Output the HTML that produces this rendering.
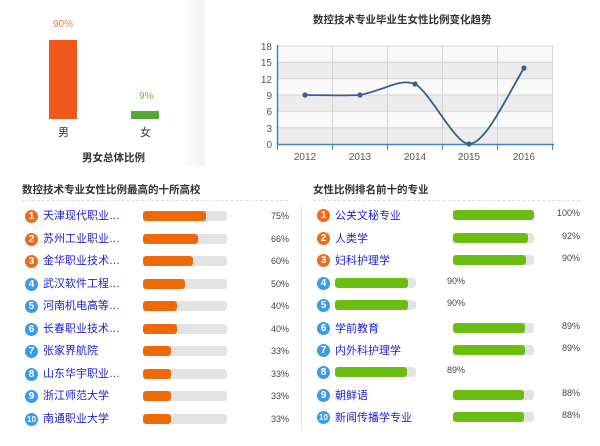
<!DOCTYPE html>
<html><head><meta charset="utf-8"><style>
*{margin:0;padding:0;box-sizing:border-box}
body{width:600px;height:446px;background:#fff;position:relative;overflow:hidden;font-family:"Liberation Sans","Noto Sans CJK SC",sans-serif}
.a{position:absolute;white-space:nowrap}
.lp{left:0;top:0;width:205px;height:166px;background:linear-gradient(to right,#fff 0,#fff 180px,#f3f3f3 205px)}
.ic{position:absolute;width:13px;height:13px;border-radius:50%;color:#fff;font-size:10px;font-weight:bold;text-align:center;line-height:13px}
.o{background:#f26b1d}.b{background:#3a9be8}
.nm{position:absolute;font-size:11px;color:#2020d0;line-height:14px}
.bg{position:absolute;height:10px;background:#e3e3e3;border-radius:3px}
.f{position:absolute;left:0;top:0;height:10px;border-radius:3px}
.pc{position:absolute;font-size:9px;color:#444}
.h{font-size:10.5px;font-weight:bold;color:#333}
</style></head><body>
<div class="a lp"></div>
<div class="a" style="left:53px;top:19px;font-size:10px;color:#f47a45">90%</div>
<div class="a" style="left:49px;top:40px;width:28px;height:79px;background:#ee5a1c"></div>
<div class="a" style="left:139px;top:91px;font-size:10px;color:#6bbb44">9%</div>
<div class="a" style="left:131px;top:111px;width:28px;height:8px;background:#55a836"></div>
<div class="a" style="left:58px;top:124px;font-size:11px;color:#333">男</div>
<div class="a" style="left:140px;top:124px;font-size:11px;color:#333">女</div>
<div class="a h" style="left:82px;top:150px;font-size:10.5px">男女总体比例</div>

<div class="a h" style="left:313px;top:12px">数控技术专业毕业生女性比例变化趋势</div>
<svg class="a" style="left:255px;top:38px" width="320" height="130" viewBox="255 38 320 130">
<rect x="278" y="46" width="275" height="98" fill="#fafafa"/>
<g fill="#ececec"><rect x="278" y="62.3" width="275" height="16.3"/><rect x="278" y="95" width="275" height="16.3"/><rect x="278" y="127.7" width="275" height="16.3"/></g>
<g stroke="#d4d4d4" stroke-width="1"><line x1="278" y1="46" x2="553" y2="46"/><line x1="278" y1="62.3" x2="553" y2="62.3"/><line x1="278" y1="78.7" x2="553" y2="78.7"/><line x1="278" y1="95" x2="553" y2="95"/><line x1="278" y1="111.3" x2="553" y2="111.3"/><line x1="278" y1="127.7" x2="553" y2="127.7"/>
<line x1="332.5" y1="46" x2="332.5" y2="144"/><line x1="387.5" y1="46" x2="387.5" y2="144"/><line x1="442.5" y1="46" x2="442.5" y2="144"/><line x1="497.5" y1="46" x2="497.5" y2="144"/><line x1="552.5" y1="46" x2="552.5" y2="144"/></g>
<line x1="277.5" y1="45" x2="277.5" y2="145" stroke="#3d85c6" stroke-width="1.5"/>
<line x1="277" y1="144.5" x2="554" y2="144.5" stroke="#3d85c6" stroke-width="1.5"/>
<g stroke="#3d85c6"><line x1="277.5" y1="145" x2="277.5" y2="150"/><line x1="332.5" y1="145" x2="332.5" y2="150"/><line x1="387.5" y1="145" x2="387.5" y2="150"/><line x1="442.5" y1="145" x2="442.5" y2="150"/><line x1="497.5" y1="145" x2="497.5" y2="150"/><line x1="552.5" y1="145" x2="552.5" y2="150"/></g>
<g font-size="10" fill="#555" text-anchor="end" font-family="Liberation Sans,sans-serif"><text x="272" y="50">18</text><text x="272" y="66">15</text><text x="272" y="83">12</text><text x="272" y="99">9</text><text x="272" y="115">6</text><text x="272" y="132">3</text><text x="272" y="148">0</text></g>
<g font-size="10" fill="#555" text-anchor="middle" font-family="Liberation Sans,sans-serif"><text x="305" y="160">2012</text><text x="360" y="160">2013</text><text x="415" y="160">2014</text><text x="469" y="160">2015</text><text x="524" y="160">2016</text></g>
<path d="M305 95 C330 95,340 96,360 95 C385 90,400 78,415 84 C430 92,455 144,469 144 C485 144,505 100,524 68" fill="none" stroke="#3a5f8f" stroke-width="1.8"/>
<g fill="#3a5f8f"><circle cx="305" cy="95" r="2.6"/><circle cx="360" cy="95" r="2.6"/><circle cx="415" cy="84" r="2.6"/><circle cx="469" cy="144" r="2.6"/><circle cx="524" cy="68" r="2.6"/></g>
</svg>

<div class="a h" style="left:22px;top:182px">数控技术专业女性比例最高的十所高校</div>
<div class="a" style="left:22px;top:200px;width:266px;border-top:1px dashed #ddd"></div>
<div class="a h" style="left:313px;top:182px">女性比例排名前十的专业</div>
<div class="a" style="left:313px;top:200px;width:267px;border-top:1px dashed #ddd"></div>
<div class="a" style="left:301px;top:205px;width:1px;height:225px;background:#e5e5e5"></div>

<div id="L"></div><div id="R"></div>
<script>
var L=[["天津现代职业…",75],["苏州工业职业…",66],["金华职业技术…",60],["武汉软件工程…",50],["河南机电高等…",40],["长春职业技术…",40],["张家界航院",33],["山东华宇职业…",33],["浙江师范大学",33],["南通职业大学",33]];
var ly=[216,239,261,284,306,329,351,374,396,419],h="";
L.forEach(function(r,i){var y=ly[i];
h+='<div class="ic '+(i<3?'o':'b')+'" style="left:25px;top:'+(y-6.5)+'px;'+(i==9?'font-size:8px;':'')+'">'+(i+1)+'</div>';
h+='<div class="nm" style="left:43px;top:'+(y-7)+'px">'+r[0]+'</div>';
h+='<div class="bg" style="left:143px;top:'+(y-5)+'px;width:84px"><div class="f" style="width:'+Math.round(r[1]*0.84)+'px;background:#ee6a08"></div></div>';
h+='<div class="pc" style="left:271px;top:'+(y-5)+'px">'+r[1]+'%</div>';});
var R=[["公关文秘专业",100],["人类学",92],["妇科护理学",90],["",90],["",90],["学前教育",89],["内外科护理学",89],["",89],["朝鲜语",88],["新闻传播学专业",88]];
var ry=[215,238,260,283,305,328,350,372,395,417];
R.forEach(function(r,i){var y=ry[i];
h+='<div class="ic '+(i<3?'o':'b')+'" style="left:317px;top:'+(y-6.5)+'px;'+(i==9?'font-size:8px;':'')+'">'+(i+1)+'</div>';
var bx=r[0]?453:335;
if(r[0])h+='<div class="nm" style="left:335px;top:'+(y-6)+'px">'+r[0]+'</div>';
h+='<div class="bg" style="left:'+bx+'px;top:'+(y-5)+'px;width:81px"><div class="f" style="width:'+Math.round(r[1]*0.81)+'px;background:#6cbd12"></div></div>';
h+='<div class="pc" style="'+(r[0]?'right:20px':'left:447px')+';top:'+(y-7)+'px">'+r[1]+'%</div>';});
document.getElementById('L').innerHTML=h;
</script>
</body></html>
